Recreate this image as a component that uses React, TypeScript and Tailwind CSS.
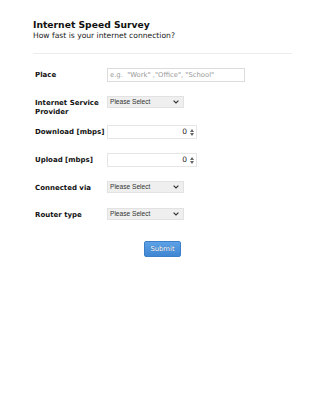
import React from 'react';

const labelFont = { fontFamily: '"DejaVu Sans", Verdana, sans-serif' };

function SelectBox() {
  return (
    <div className="flex h-[12px] w-[77px] items-center justify-between border border-[#e2e2e2] bg-[#efefef] pl-[2px] pr-[4px] font-['Liberation_Sans',Arial,sans-serif] text-[6.6px] text-[#333]">
      <span>Please Select</span>
      <svg width="6" height="4" viewBox="0 0 6 4">
        <path d="M0.6 0.6 L3 3 L5.4 0.6" fill="none" stroke="#333" strokeWidth="1.2" />
      </svg>
    </div>
  );
}

function NumberBox() {
  return (
    <div className="flex h-[14px] w-[90px] items-center border border-[#e6e6e6] bg-white">
      <div className="flex-1 pr-[3px] text-right text-[7.5px] text-[#222]">0</div>
      <div className="mr-[2px] flex flex-col items-center justify-center gap-[1px]">
        <svg width="4" height="3" viewBox="0 0 4 3">
          <path d="M0 3 L2 0 L4 3 Z" fill="#666" />
        </svg>
        <svg width="4" height="3" viewBox="0 0 4 3">
          <path d="M0 0 L2 3 L4 0 Z" fill="#666" />
        </svg>
      </div>
    </div>
  );
}

function Row({ label, h, children }: { label: React.ReactNode; h: string; children: React.ReactNode }) {
  return (
    <div className={`flex items-start ${h}`}>
      <div className="w-[74px] shrink-0 whitespace-nowrap pl-[2px] pt-[3px] text-[7px] font-bold leading-[9px] text-[#111]">
        {label}
      </div>
      {children}
    </div>
  );
}

export default function App() {
  return (
    <div className="min-h-[400px] w-[325px] bg-white" style={labelFont}>
      <div className="pl-[33px] pr-[33px] pt-[18px]">
        <h1 className="text-[9.2px] font-bold leading-[13px] text-[#111]">Internet Speed Survey</h1>
        <p className="text-[7.6px] leading-[10px] text-[#222]">How fast is your internet connection?</p>
        <div className="mt-[12px] h-px w-[259px] bg-[#ececec]" />

        <div className="mt-[14px] flex flex-col">
          <Row label="Place" h="h-[28px]">
            <div className="flex h-[14px] w-[138px] items-center border border-[#dcdcdc] bg-white pl-[2px] text-[6.8px] text-[#9a9a9a]">
              e.g.&nbsp;&nbsp;"Work" ,"Office", "School"
            </div>
          </Row>
          <Row label={<>Internet Service<br />Provider</>} h="h-[29px]">
            <SelectBox />
          </Row>
          <Row label="Download [mbps]" h="h-[28px]">
            <NumberBox />
          </Row>
          <Row label="Upload [mbps]" h="h-[28px]">
            <NumberBox />
          </Row>
          <Row label="Connected via" h="h-[27px]">
            <SelectBox />
          </Row>
          <Row label="Router type" h="h-[33px]">
            <SelectBox />
          </Row>
        </div>

        <div className="flex pl-[111px]">
          <button className="flex h-[16px] w-[37px] items-center justify-center rounded-[2px] border border-[#3b7fc9] bg-gradient-to-b from-[#5da2e6] to-[#3f86d3] text-[6.8px] text-white [text-shadow:0_0_1px_rgba(0,0,0,0.35)]">
            Submit
          </button>
        </div>
      </div>
    </div>
  );
}
